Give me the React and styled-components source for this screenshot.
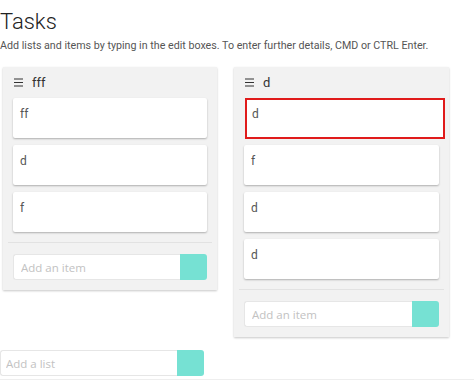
import React from "react";
import styled, { createGlobalStyle } from "styled-components";

const Global = createGlobalStyle`
  html, body { margin: 0; padding: 0; background: #fff; }
  body { font-family: Roboto, "Noto Sans", "Liberation Sans", sans-serif; color: #333; }
  * { box-sizing: border-box; }
`;

const Page = styled.div`
  width: 474px;
  height: 390px;
  overflow: hidden;
  padding-top: 7px;
`;

const Title = styled.h1`
  margin: 0;
  font-size: 22px;
  font-weight: 300;
  line-height: 29px;
  color: #222;
`;

const Subtitle = styled.p`
  margin: 3px 0 0 0;
  font-size: 10.7px;
  line-height: 14px;
  color: #555;
`;

const Board = styled.div`
  display: flex;
  align-items: flex-start;
  gap: 17px;
  margin: 14px 0 0 3px;
`;

const List = styled.section`
  width: ${(p) => p.$w}px;
  background: #f2f2f2;
  box-shadow: 0 1px 2px rgba(0, 0, 0, 0.22);
  padding: 0 10px 10px;
`;

const ListHeader = styled.div`
  height: 31px;
  display: flex;
  align-items: center;
  gap: 9px;
  padding-left: 1px;
  font-size: 13px;
  color: #333;
`;

const MenuIcon = styled.svg`
  width: 9px;
  height: 9px;
  flex: none;
`;

const Cards = styled.div`
  display: flex;
  flex-direction: column;
  gap: 7px;
`;

const Card = styled.div`
  height: 40px;
  background: #fff;
  border-radius: 2px;
  box-shadow: 0 1px 2px rgba(0, 0, 0, 0.28);
  padding: 9px 7px;
  font-size: 12px;
  line-height: 14px;
  color: #555;
  ${(p) =>
    p.$active &&
    `
    margin: 0 -6px -1px 1px;
    height: 41px;
    border: 2px solid #e01b1b;
    border-radius: 0;
    box-shadow: none;
    padding: 7px 5px;
  `}
`;

const Divider = styled.div`
  margin: 10px -5px 11px;
  border-top: 1px solid #e2e2e2;
`;

const AddForm = styled.form`
  display: flex;
  height: 26px;
  width: ${(p) => (p.$w ? `${p.$w}px` : "auto")};
  margin: 0;
`;

const AddInput = styled.input`
  flex: 1;
  min-width: 0;
  height: 26px;
  border: 1px solid #e6e6e6;
  border-right: none;
  border-radius: 3px 0 0 3px;
  background: #fff;
  padding: 0 ${(p) => p.$pad || 7}px;
  font-family: "Open Sans", Roboto, sans-serif;
  font-size: 11.5px;
  color: #444;
  outline: none;
  &::placeholder { color: #c2c2c2; }
`;

const AddButton = styled.button`
  width: 27px;
  height: 26px;
  border: none;
  border-radius: 0 3px 3px 0;
  background: #76e1d3;
  padding: 0;
`;

const ListAdd = styled.div`
  margin-top: 13px;
  padding-bottom: 3px;
  border-bottom: 1px solid #eeeeee;
`;

const Menu = () => (
  <MenuIcon viewBox="0 0 9 9">
    <path d="M0 1h9M0 4.5h9M0 8h9" stroke="#333" strokeWidth="1.1" />
  </MenuIcon>
);

const lists = [
  { title: "fff", w: 214, items: ["ff", "d", "f"], active: -1 },
  { title: "d", w: 215, items: ["d", "f", "d", "d"], active: 0 },
];

export default function App() {
  return (
    <Page>
      <Global />
      <Title>Tasks</Title>
      <Subtitle>
        Add lists and items by typing in the edit boxes. To enter further details, CMD or CTRL Enter.
      </Subtitle>
      <Board>
        {lists.map((l, i) => (
          <List key={i} $w={l.w}>
            <ListHeader>
              <Menu />
              <span>{l.title}</span>
            </ListHeader>
            <Cards>
              {l.items.map((it, j) => (
                <Card key={j} $active={j === l.active}>
                  {it}
                </Card>
              ))}
            </Cards>
            <Divider />
            <AddForm onSubmit={(e) => e.preventDefault()}>
              <AddInput placeholder="Add an item" />
              <AddButton type="button" aria-label="add item" />
            </AddForm>
          </List>
        ))}
      </Board>
      <ListAdd>
        <AddForm $w={204} onSubmit={(e) => e.preventDefault()}>
          <AddInput placeholder="Add a list" $pad={5} />
          <AddButton type="button" aria-label="add list" />
        </AddForm>
      </ListAdd>
    </Page>
  );
}
